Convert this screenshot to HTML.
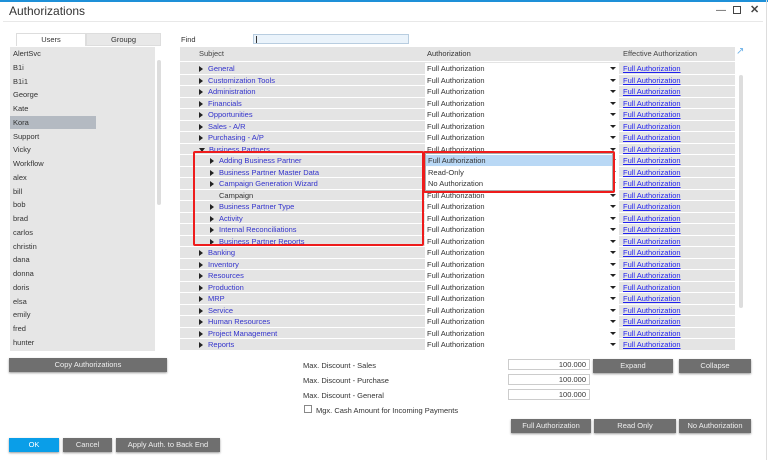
<!DOCTYPE html>
<html><head><meta charset="utf-8"><style>
*{box-sizing:border-box;margin:0;padding:0}
body{width:768px;height:460px;background:#fff;font-family:"Liberation Sans",sans-serif;font-size:7.5px;color:#333;position:relative;overflow:hidden}
.a{position:absolute}
.row{position:absolute;left:0;height:11.5px;width:555px;border-bottom:1px solid #fff}
.c0{position:absolute;left:0;width:15px;height:100%;background:#e4e4e4}
.c1{position:absolute;left:16px;width:228px;height:100%;background:#e4e4e4;line-height:11px;color:#3333cc;white-space:nowrap}
.c2{position:absolute;left:245px;width:194px;height:100%;background:#fff;line-height:11px;padding-left:2px}
.c2:after{content:"";position:absolute;right:3px;top:4px;border:3px solid transparent;border-top:3px solid #222;border-bottom:0}
.c2.h:after{display:none}
.c3{position:absolute;left:440px;width:115px;height:100%;background:#e4e4e4;line-height:11px;padding-left:3px;color:#2222ee;text-decoration:underline}
.t{display:inline-block;width:0;height:0;border:3px solid transparent;border-left:4px solid #222;border-right:0;margin-right:5px;vertical-align:-1px}
.d{display:inline-block;width:0;height:0;border:3px solid transparent;border-top:4px solid #222;border-bottom:0;margin-right:4px;vertical-align:0}
.u{position:absolute;left:10px;width:86px;height:13px;background:#e6e6e6;line-height:13px;padding-left:3px}
.u2{position:absolute;left:97px;width:56px;height:13px;background:#e6e6e6}
.btn{position:absolute;background:#6f6f6f;color:#eee;text-align:center;height:14px;line-height:14px;font-size:7.5px;box-shadow:0 1px 2px #999}
.inp{position:absolute;background:#fff;border:1px solid #ccc;height:11px;text-align:right;padding-right:3px;line-height:10px}
</style></head><body>
<div class="a" style="left:0;top:0;width:768px;height:2px;background:#1e90d8"></div>
<div class="a" style="left:9px;top:4px;font-size:12px;color:#333">Authorizations</div>
<div class="a" style="left:716px;top:5px;font-size:10px;color:#444">&#8212;</div>
<div class="a" style="left:733px;top:6px;width:8px;height:8px;border:1px solid #444"></div>
<div class="a" style="left:750px;top:3px;font-size:11px;color:#444;font-weight:bold">✕</div>
<div class="a" style="left:3px;top:21px;width:760px;height:1px;background:#e8e8e8"></div>
<div class="a" style="left:766px;top:0;width:1px;height:460px;background:#ddd"></div>

<div class="a" style="left:16px;top:33px;width:70px;height:13px;background:#fff;border:1px solid #ddd;border-bottom:0;text-align:center;line-height:12px">Users</div>
<div class="a" style="left:86px;top:33px;width:75px;height:13px;background:#e8e8e8;border:1px solid #ddd;text-align:center;line-height:12px">Groupg</div>
<div class="a" style="left:10px;top:47px;width:145px;height:304px;background:#e6e6e6"></div>
<div class="u" style="top:47px">AlertSvc</div><div class="u2" style="top:47px"></div>
<div class="u" style="top:61px">B1i</div><div class="u2" style="top:61px"></div>
<div class="u" style="top:75px">B1i1</div><div class="u2" style="top:75px"></div>
<div class="u" style="top:88px">George</div><div class="u2" style="top:88px"></div>
<div class="u" style="top:102px">Kate</div><div class="u2" style="top:102px"></div>
<div class="u" style="top:116px;background:#b4bac2">Kora</div><div class="u2" style="top:116px"></div>
<div class="u" style="top:130px">Support</div><div class="u2" style="top:130px"></div>
<div class="u" style="top:143px">Vicky</div><div class="u2" style="top:143px"></div>
<div class="u" style="top:157px">Workflow</div><div class="u2" style="top:157px"></div>
<div class="u" style="top:171px">alex</div><div class="u2" style="top:171px"></div>
<div class="u" style="top:185px">bill</div><div class="u2" style="top:185px"></div>
<div class="u" style="top:198px">bob</div><div class="u2" style="top:198px"></div>
<div class="u" style="top:212px">brad</div><div class="u2" style="top:212px"></div>
<div class="u" style="top:226px">carlos</div><div class="u2" style="top:226px"></div>
<div class="u" style="top:240px">christin</div><div class="u2" style="top:240px"></div>
<div class="u" style="top:253px">dana</div><div class="u2" style="top:253px"></div>
<div class="u" style="top:267px">donna</div><div class="u2" style="top:267px"></div>
<div class="u" style="top:281px">doris</div><div class="u2" style="top:281px"></div>
<div class="u" style="top:295px">elsa</div><div class="u2" style="top:295px"></div>
<div class="u" style="top:308px">emily</div><div class="u2" style="top:308px"></div>
<div class="u" style="top:322px">fred</div><div class="u2" style="top:322px"></div>
<div class="u" style="top:336px">hunter</div><div class="u2" style="top:336px"></div>
<div class="a" style="left:155px;top:47px;width:8px;height:304px;background:#fff"></div>
<div class="a" style="left:157px;top:60px;width:4px;height:145px;background:#ddd;border-radius:2px"></div>

<div class="a" style="left:181px;top:35px">Find</div>
<div class="a" style="left:253px;top:34px;width:156px;height:10px;background:#eaf3fb;border:1px solid #b8cde0"></div>
<div class="a" style="left:256px;top:36px;width:1px;height:7px;background:#333"></div>

<div class="a" style="left:180px;top:47px;width:555px;height:304px;background:#e4e4e4">
<div class="row" style="top:0;height:15px"><div class="c0"></div><div class="c1" style="color:#444;line-height:14px;padding-left:3px">Subject</div><div class="c2 h" style="background:#e4e4e4;line-height:14px">Authorization</div><div class="c3" style="color:#444;text-decoration:none;line-height:14px">Effective Authorization</div></div>
<div style="position:absolute;left:0;top:16px;width:555px">
<div class="row" style="top:0"><div class="c0"></div><div class="c1" style="padding-left:3px"><span class="t"></span>General</div><div class="c2">Full Authorization</div><div class="c3">Full Authorization</div></div>
<div class="row" style="top:11.5px"><div class="c0"></div><div class="c1" style="padding-left:3px"><span class="t"></span>Customization Tools</div><div class="c2">Full Authorization</div><div class="c3">Full Authorization</div></div>
<div class="row" style="top:23px"><div class="c0"></div><div class="c1" style="padding-left:3px"><span class="t"></span>Administration</div><div class="c2">Full Authorization</div><div class="c3">Full Authorization</div></div>
<div class="row" style="top:34.5px"><div class="c0"></div><div class="c1" style="padding-left:3px"><span class="t"></span>Financials</div><div class="c2">Full Authorization</div><div class="c3">Full Authorization</div></div>
<div class="row" style="top:46px"><div class="c0"></div><div class="c1" style="padding-left:3px"><span class="t"></span>Opportunities</div><div class="c2">Full Authorization</div><div class="c3">Full Authorization</div></div>
<div class="row" style="top:57.5px"><div class="c0"></div><div class="c1" style="padding-left:3px"><span class="t"></span>Sales - A/R</div><div class="c2">Full Authorization</div><div class="c3">Full Authorization</div></div>
<div class="row" style="top:69px"><div class="c0"></div><div class="c1" style="padding-left:3px"><span class="t"></span>Purchasing - A/P</div><div class="c2">Full Authorization</div><div class="c3">Full Authorization</div></div>
<div class="row" style="top:80.5px"><div class="c0"></div><div class="c1" style="padding-left:3px"><span class="d"></span>Business Partners</div><div class="c2">Full Authorization</div><div class="c3">Full Authorization</div></div>
<div class="row" style="top:92px"><div class="c0"></div><div class="c1" style="padding-left:14px"><span class="t"></span>Adding Business Partner</div><div class="c2">Full Authorization</div><div class="c3">Full Authorization</div></div>
<div class="row" style="top:103.5px"><div class="c0"></div><div class="c1" style="padding-left:14px"><span class="t"></span>Business Partner Master Data</div><div class="c2">Full Authorization</div><div class="c3">Full Authorization</div></div>
<div class="row" style="top:115px"><div class="c0"></div><div class="c1" style="padding-left:14px"><span class="t"></span>Campaign Generation Wizard</div><div class="c2">Full Authorization</div><div class="c3">Full Authorization</div></div>
<div class="row" style="top:126.5px"><div class="c0"></div><div class="c1" style="padding-left:23px;color:#333">Campaign</div><div class="c2">Full Authorization</div><div class="c3">Full Authorization</div></div>
<div class="row" style="top:138px"><div class="c0"></div><div class="c1" style="padding-left:14px"><span class="t"></span>Business Partner Type</div><div class="c2">Full Authorization</div><div class="c3">Full Authorization</div></div>
<div class="row" style="top:149.5px"><div class="c0"></div><div class="c1" style="padding-left:14px"><span class="t"></span>Activity</div><div class="c2">Full Authorization</div><div class="c3">Full Authorization</div></div>
<div class="row" style="top:161px"><div class="c0"></div><div class="c1" style="padding-left:14px"><span class="t"></span>Internal Reconciliations</div><div class="c2">Full Authorization</div><div class="c3">Full Authorization</div></div>
<div class="row" style="top:172.5px"><div class="c0"></div><div class="c1" style="padding-left:14px"><span class="t"></span>Business Partner Reports</div><div class="c2">Full Authorization</div><div class="c3">Full Authorization</div></div>
<div class="row" style="top:184px"><div class="c0"></div><div class="c1" style="padding-left:3px"><span class="t"></span>Banking</div><div class="c2">Full Authorization</div><div class="c3">Full Authorization</div></div>
<div class="row" style="top:195.5px"><div class="c0"></div><div class="c1" style="padding-left:3px"><span class="t"></span>Inventory</div><div class="c2">Full Authorization</div><div class="c3">Full Authorization</div></div>
<div class="row" style="top:207px"><div class="c0"></div><div class="c1" style="padding-left:3px"><span class="t"></span>Resources</div><div class="c2">Full Authorization</div><div class="c3">Full Authorization</div></div>
<div class="row" style="top:218.5px"><div class="c0"></div><div class="c1" style="padding-left:3px"><span class="t"></span>Production</div><div class="c2">Full Authorization</div><div class="c3">Full Authorization</div></div>
<div class="row" style="top:230px"><div class="c0"></div><div class="c1" style="padding-left:3px"><span class="t"></span>MRP</div><div class="c2">Full Authorization</div><div class="c3">Full Authorization</div></div>
<div class="row" style="top:241.5px"><div class="c0"></div><div class="c1" style="padding-left:3px"><span class="t"></span>Service</div><div class="c2">Full Authorization</div><div class="c3">Full Authorization</div></div>
<div class="row" style="top:253px"><div class="c0"></div><div class="c1" style="padding-left:3px"><span class="t"></span>Human Resources</div><div class="c2">Full Authorization</div><div class="c3">Full Authorization</div></div>
<div class="row" style="top:264.5px"><div class="c0"></div><div class="c1" style="padding-left:3px"><span class="t"></span>Project Management</div><div class="c2">Full Authorization</div><div class="c3">Full Authorization</div></div>
<div class="row" style="top:276px"><div class="c0"></div><div class="c1" style="padding-left:3px"><span class="t"></span>Reports</div><div class="c2">Full Authorization</div><div class="c3">Full Authorization</div></div>
</div></div>

<div class="a" style="left:425px;top:153px;width:188px;height:38px;background:#fff;border:1px solid #aaa"></div>
<div class="a" style="left:426px;top:155px;width:186px;height:11px;background:#b9d8f5;line-height:11px;padding-left:2px">Full Authorization</div>
<div class="a" style="left:426px;top:167px;width:186px;height:11px;line-height:11px;padding-left:2px">Read-Only</div>
<div class="a" style="left:426px;top:178px;width:186px;height:11px;line-height:11px;padding-left:2px">No Authorization</div>
<div class="a" style="left:193px;top:151px;width:231px;height:95px;border:2.5px solid #ee1c1c;border-radius:2px"></div>
<div class="a" style="left:423px;top:151px;width:192px;height:42px;border:2.5px solid #ee1c1c;border-radius:2px"></div>

<div class="a" style="left:736px;top:47px;width:9px;height:10px;font-size:10px;color:#6ab0e8;line-height:9px">&#8599;</div>
<div class="a" style="left:739px;top:75px;width:4px;height:233px;background:#ddd;border-radius:2px"></div>

<div class="btn" style="left:9px;top:358px;width:158px">Copy Authorizations</div>
<div class="a" style="left:303px;top:361px">Max. Discount - Sales</div>
<div class="a" style="left:303px;top:376px">Max. Discount - Purchase</div>
<div class="a" style="left:303px;top:391px">Max. Discount - General</div>
<div class="inp" style="left:508px;top:359px;width:82px">100.000</div>
<div class="inp" style="left:508px;top:374px;width:82px">100.000</div>
<div class="inp" style="left:508px;top:389px;width:82px">100.000</div>
<div class="a" style="left:304px;top:405px;width:8px;height:8px;border:1px solid #888;background:#fff"></div>
<div class="a" style="left:316px;top:406px">Mgx. Cash Amount for Incoming Payments</div>
<div class="btn" style="left:593px;top:359px;width:80px">Expand</div>
<div class="btn" style="left:679px;top:359px;width:72px">Collapse</div>
<div class="btn" style="left:511px;top:419px;width:80px">Full Authorization</div>
<div class="btn" style="left:594px;top:419px;width:82px">Read Only</div>
<div class="btn" style="left:679px;top:419px;width:72px">No Authorization</div>
<div class="btn" style="left:9px;top:438px;width:50px;background:#0a9ee8;color:#fff">OK</div>
<div class="btn" style="left:63px;top:438px;width:49px">Cancel</div>
<div class="btn" style="left:116px;top:438px;width:104px">Apply Auth. to Back End</div>
</body></html>
